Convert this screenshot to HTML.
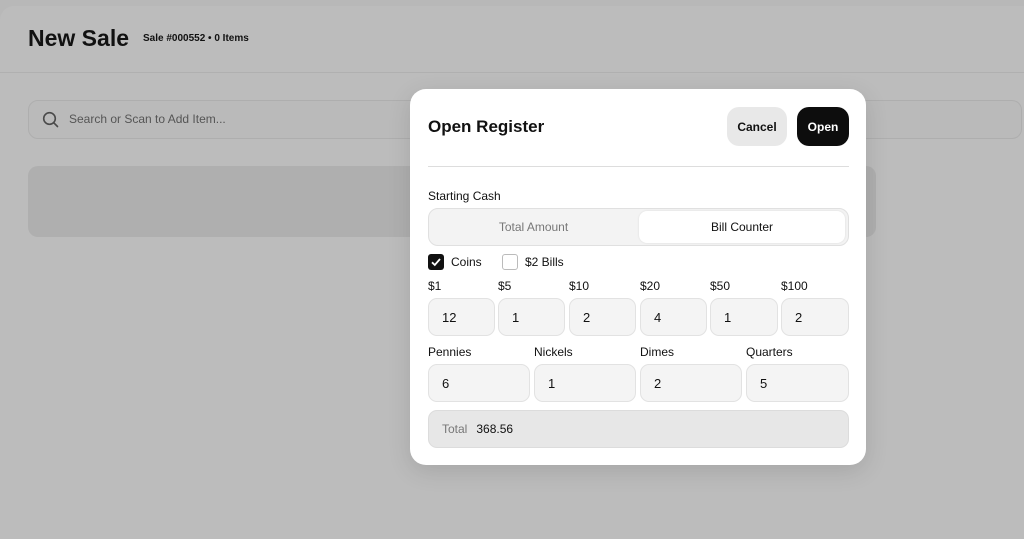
<!DOCTYPE html>
<html style="width:1024px;height:539px;overflow:hidden"><head><style>
*{box-sizing:border-box;margin:0;padding:0}
body{width:1024px;height:539px;overflow:hidden;background:#b8b8b8;font-family:"Liberation Sans",sans-serif;position:relative;color:#111}
.a{position:absolute}
.page{left:0;top:6px;width:1024px;height:533px;background:#bcbcbc;border-radius:14px 0 0 0}
.in{background:#f4f4f4;border:1px solid #e2e2e2;border-radius:9px;font-size:13px;padding-left:13px;display:flex;align-items:center}
.lb{font-size:12px}
</style></head><body>
<div class="a page"></div>
<div class="a" style="left:28px;top:25px;font-size:23px;font-weight:bold">New Sale</div>
<div class="a" style="left:143px;top:33px;font-size:10px;font-weight:bold">Sale #000552 • 0 Items</div>
<div class="a" style="left:0;top:72px;width:1024px;height:1px;background:#b0b0b0"></div>
<div class="a" style="left:28px;top:100px;width:994px;height:39px;border:1px solid #aeaeae;border-radius:10px;background:#bababa"></div>
<svg class="a" style="left:42px;top:111px" width="17" height="17" viewBox="0 0 17 17"><circle cx="7.5" cy="7.5" r="5.8" fill="none" stroke="#4a4a4a" stroke-width="1.6"/><path d="M11.8 11.8L15.5 15.5" stroke="#4a4a4a" stroke-width="1.6" stroke-linecap="round"/></svg>
<div class="a" style="left:69px;top:112px;font-size:12px;color:#555">Search or Scan to Add Item...</div>
<div class="a" style="left:28px;top:166px;width:848px;height:71px;border-radius:10px;background:#afafaf"></div>

<div class="a" style="left:410px;top:89px;width:456px;height:376px;background:#fff;border-radius:16px;box-shadow:0 6px 24px rgba(0,0,0,.12)"></div>
<div class="a" style="left:428px;top:117px;font-size:17px;font-weight:bold">Open Register</div>
<div class="a" style="left:727px;top:107px;width:60px;height:39px;background:#e8e8e8;border-radius:12px;font-size:12px;font-weight:bold;display:flex;align-items:center;justify-content:center">Cancel</div>
<div class="a" style="left:797px;top:107px;width:52px;height:39px;background:#0d0d0d;color:#fff;border-radius:12px;font-size:12px;font-weight:bold;display:flex;align-items:center;justify-content:center">Open</div>
<div class="a" style="left:428px;top:166px;width:421px;height:1px;background:#ddd"></div>
<div class="a lb" style="left:428px;top:189px">Starting Cash</div>
<div class="a" style="left:428px;top:208px;width:421px;height:38px;background:#f3f3f3;border:1px solid #e0e0e0;border-radius:10px"></div>
<div class="a" style="left:428px;top:220px;width:211px;text-align:center;font-size:12px;color:#777">Total Amount</div>
<div class="a" style="left:639px;top:211px;width:206px;height:32px;background:#fff;border-radius:8px;font-size:12px;display:flex;align-items:center;justify-content:center;box-shadow:0 0 2px rgba(0,0,0,.1)">Bill Counter</div>
<div class="a" style="left:428px;top:254px;width:16px;height:16px;background:#111;border-radius:3px"></div>
<svg class="a" style="left:428px;top:254px" width="16" height="16"><path d="M4 8.3L6.8 11L12 5" stroke="#fff" stroke-width="1.8" fill="none"/></svg>
<div class="a lb" style="left:451px;top:255px">Coins</div>
<div class="a" style="left:502px;top:254px;width:16px;height:16px;border:1px solid #bbb;border-radius:3px"></div>
<div class="a lb" style="left:525px;top:255px">$2 Bills</div>

<div class="a lb" style="left:428px;top:279px">$1</div>
<div class="a lb" style="left:498px;top:279px">$5</div>
<div class="a lb" style="left:569px;top:279px">$10</div>
<div class="a lb" style="left:640px;top:279px">$20</div>
<div class="a lb" style="left:710px;top:279px">$50</div>
<div class="a lb" style="left:781px;top:279px">$100</div>
<div class="a in" style="left:428px;top:298px;width:67px;height:38px">12</div>
<div class="a in" style="left:498px;top:298px;width:67px;height:38px">1</div>
<div class="a in" style="left:569px;top:298px;width:67px;height:38px">2</div>
<div class="a in" style="left:640px;top:298px;width:67px;height:38px">4</div>
<div class="a in" style="left:710px;top:298px;width:68px;height:38px">1</div>
<div class="a in" style="left:781px;top:298px;width:68px;height:38px">2</div>

<div class="a lb" style="left:428px;top:345px">Pennies</div>
<div class="a lb" style="left:534px;top:345px">Nickels</div>
<div class="a lb" style="left:640px;top:345px">Dimes</div>
<div class="a lb" style="left:746px;top:345px">Quarters</div>
<div class="a in" style="left:428px;top:364px;width:102px;height:38px">6</div>
<div class="a in" style="left:534px;top:364px;width:102px;height:38px">1</div>
<div class="a in" style="left:640px;top:364px;width:102px;height:38px">2</div>
<div class="a in" style="left:746px;top:364px;width:103px;height:38px">5</div>
<div class="a" style="left:428px;top:410px;width:421px;height:38px;background:#e7e7e7;border:1px solid #dcdcdc;border-radius:9px;display:flex;align-items:center;padding-left:13px;font-size:12px"><span style="color:#777;margin-right:9px">Total</span>368.56</div>
</body></html>
